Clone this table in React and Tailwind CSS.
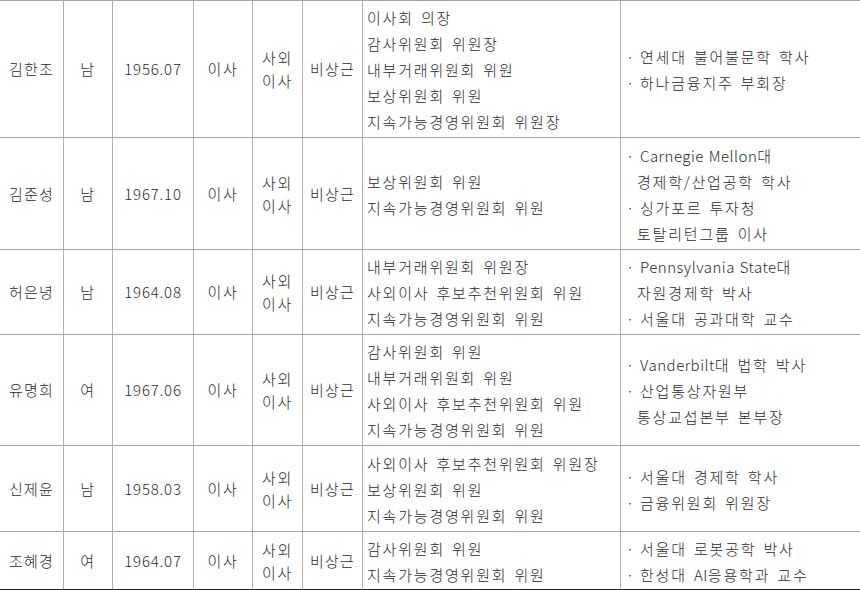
import React from "react";

const rows = [
  {
    h: "h-[137px]",
    name: "김한조", sex: "남", birth: "1956.07",
    roles: ["이사회 의장", "감사위원회 위원장", "내부거래위원회 위원", "보상위원회 위원", "지속가능경영위원회 위원장"],
    career: [["b", "연세대 불어불문학 학사"], ["b", "하나금융지주 부회장"]],
  },
  {
    h: "h-[112px]",
    name: "김준성", sex: "남", birth: "1967.10",
    roles: ["보상위원회 위원", "지속가능경영위원회 위원"],
    career: [["b", "Carnegie Mellon대"], ["c", "경제학/산업공학 학사"], ["b", "싱가포르 투자청"], ["c", "토탈리턴그룹 이사"]],
  },
  {
    h: "h-[85px]",
    name: "허은녕", sex: "남", birth: "1964.08",
    roles: ["내부거래위원회 위원장", "사외이사 후보추천위원회 위원", "지속가능경영위원회 위원"],
    career: [["b", "Pennsylvania State대"], ["c", "자원경제학 박사"], ["b", "서울대 공과대학 교수"]],
  },
  {
    h: "h-[111px]",
    name: "유명희", sex: "여", birth: "1967.06",
    roles: ["감사위원회 위원", "내부거래위원회 위원", "사외이사 후보추천위원회 위원", "지속가능경영위원회 위원"],
    career: [["b", "Vanderbilt대 법학 박사"], ["b", "산업통상자원부"], ["c", "통상교섭본부 본부장"]],
  },
  {
    h: "h-[86px]",
    name: "신제윤", sex: "남", birth: "1958.03",
    roles: ["사외이사 후보추천위원회 위원장", "보상위원회 위원", "지속가능경영위원회 위원"],
    career: [["b", "서울대 경제학 학사"], ["b", "금융위원회 위원장"]],
  },
  {
    h: "h-[58px]",
    name: "조혜경", sex: "여", birth: "1964.07",
    roles: ["감사위원회 위원", "지속가능경영위원회 위원"],
    career: [["b", "서울대 로봇공학 박사"], ["b", "한성대 AI응용학과 교수"]],
  },
];

function T({ text }) {
  const parts = text.split(/([A-Za-z][A-Za-z ]*[A-Za-z]|[A-Za-z])/);
  return (
    <>
      {parts.map((p, i) =>
        /[A-Za-z]/.test(p) ? (
          <span key={i} className="tracking-[0.5px] [word-spacing:1px]">{p}</span>
        ) : (
          <span key={i}>{p}</span>
        )
      )}
    </>
  );
}

function Row({ r, last }) {
  const bb = last ? "border-b border-b-[#1e1e1e]" : "border-b border-b-[#a3a3a3]";
  const cell = `${bb} border-r border-r-[#b0b0b0] flex items-center justify-center`;
  return (
    <div className={`flex ${r.h}`}>
      <div className={`${cell} w-[64px] tracking-[1.2px]`}>{r.name}</div>
      <div className={`${cell} w-[49px]`}>{r.sex}</div>
      <div className={`${cell} w-[81px] tracking-[0.8px]`}>{r.birth}</div>
      <div className={`${cell} w-[59px]`}>이사</div>
      <div className={`${cell} w-[50px] flex-col leading-[23px]`}>
        <span>사외</span>
        <span>이사</span>
      </div>
      <div className={`${cell} w-[60px] tracking-[1.2px]`}>비상근</div>
      <div className={`${bb} border-r border-r-[#b0b0b0] w-[258px] flex flex-col justify-center pl-[4px] pt-[2px]`}>
        {r.roles.map((t, i) => (
          <div key={i} className="whitespace-nowrap">{t}</div>
        ))}
      </div>
      <div className={`${bb} flex-1 flex flex-col justify-center pl-[5px] pt-[2px]`}>
        {r.career.map(([k, t], i) =>
          k === "b" ? (
            <div key={i} className="flex whitespace-nowrap">
              <span className="w-[14px]">·</span>
              <span><T text={t} /></span>
            </div>
          ) : (
            <div key={i} className="whitespace-nowrap pl-[11px]"><T text={t} /></div>
          )
        )}
      </div>
    </div>
  );
}

export default function App() {
  return (
    <div
      className="w-[860px] h-[590px] bg-white text-[#2a2a2a] text-[15px] font-light leading-[26px] tracking-[1.8px] [word-spacing:2px] overflow-hidden"
      style={{ fontFamily: '"Noto Sans CJK KR", "Noto Sans", sans-serif' }}
    >
      <div className="border-t border-t-[#a3a3a3] flex flex-col">
        {rows.map((r, i) => (
          <Row key={i} r={r} last={i === rows.length - 1} />
        ))}
      </div>
    </div>
  );
}
